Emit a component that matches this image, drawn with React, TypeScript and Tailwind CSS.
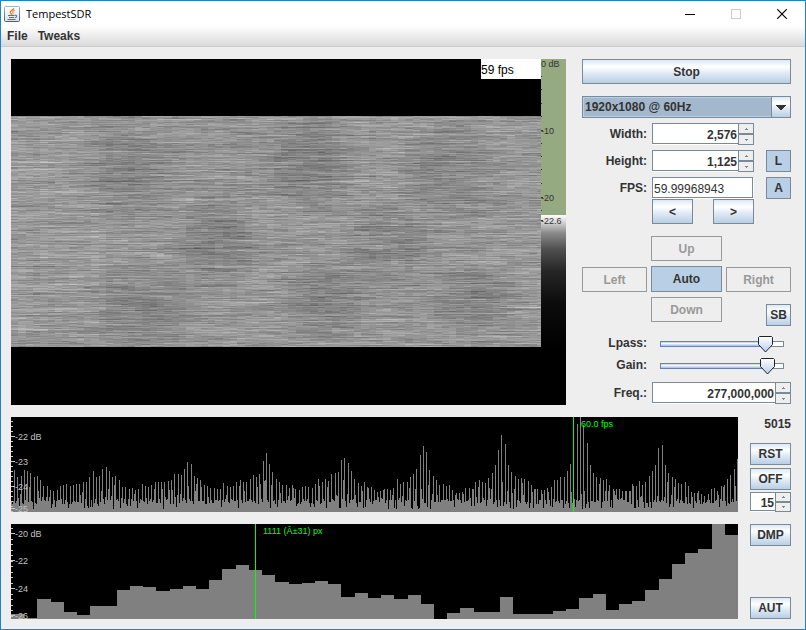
import { useId, useMemo, useState } from "react";
import type { ReactNode } from "react";

/* Deterministic pseudo random numbers, so every render draws the same frame. */
function makeRandom(seed: number) {
  let s = seed >>> 0;
  return () => {
    s = (s + 0x6d2b79f5) >>> 0;
    let t = s;
    t = Math.imul(t ^ (t >>> 15), t | 1);
    t ^= t + Math.imul(t ^ (t >>> 7), t | 61);
    return ((t ^ (t >>> 14)) >>> 0) / 4294967296;
  };
}

/* Darker patches in the received frame: centre x, centre y, radius x, radius y. */
const PATCHES = [
  [117, 57, 38, 40],
  [205, 127, 32, 40],
  [293, 45, 38, 44],
  [373, 127, 38, 38],
  [440, 55, 40, 42],
  [133, 190, 40, 32],
  [310, 184, 38, 34],
  [457, 184, 34, 28],
];

const FRAME_W = 530;
const FRAME_H = 231;
const CELL = 7.3;

function buildFrame() {
  const random = makeRandom(1080);
  const normal = () => random() + random() + random() + random() - 2;
  const levels = new Map<number, string[]>();
  const columns = Math.ceil(FRAME_W / CELL);
  const columnTone = Array.from({ length: columns }, () => normal() * 2);
  for (let y = 0; y < FRAME_H; y++) {
    let drift = normal();
    for (let c = 0; c < columns; c++) {
      drift = drift * 0.68 + normal() * 0.73;
      const x0 = Math.round(c * CELL);
      const x1 = Math.min(FRAME_W, Math.round((c + 1) * CELL));
      let dark = 0;
      for (const [px, py, rx, ry] of PATCHES) {
        const d = ((x0 - px) / rx) ** 2 + ((y - py) / ry) ** 2;
        dark += 16 * Math.exp(-d * d * 0.6);
      }
      const value = 152 - dark + drift * 22 + columnTone[c];
      const level = Math.max(80, Math.min(200, Math.round(value / 6) * 6));
      const list = levels.get(level) ?? [];
      list.push(`M${x0} ${y}h${x1 - x0}v1h${x0 - x1}z`);
      levels.set(level, list);
    }
  }
  return [...levels].map(([level, parts]) => ({ level, d: parts.join("") }));
}

/* Peak heights of the frame-rate autocorrelation, one for each spike. */
const SPIKES = [
  42, 35, 36, 42, 41, 39, 35, 36, 32, 26, 26, 22, 21, 22, 26, 27, 28, 26, 27, 28, 28, 30, 30, 35, 41, 35, 36, 43, 45,
  41, 35, 36, 32, 25, 25, 23, 24, 22, 23, 28, 26, 25, 27, 30, 30, 30, 30, 31, 32, 38, 38, 37, 43, 50, 48, 36, 34, 32,
  27, 26, 24, 24, 23, 23, 29, 26, 25, 26, 30, 32, 30, 30, 33, 37, 35, 38, 51, 59, 48, 40, 33, 30, 27, 27, 24, 27, 23,
  22, 25, 26, 25, 24, 28, 33, 30, 33, 31, 38, 39, 40, 52, 54, 49, 41, 33, 29, 26, 30, 25, 25, 22, 20, 21, 23, 23, 22,
  24, 33, 28, 30, 30, 35, 38, 43, 57, 66, 60, 42, 36, 32, 27, 28, 26, 27, 22, 19, 19, 20, 24, 24, 23, 30, 32, 30, 29,
  34, 39, 47, 62, 77, 68, 47, 40, 36, 33, 34, 33, 31, 27, 23, 23, 22, 22, 24, 25, 32, 32, 35, 35, 41, 48, 36, 88, 95,
  87, 69, 47, 39, 35, 34, 32, 33, 27, 23, 23, 23, 21, 21, 21, 28, 26, 31, 27, 30, 36, 41, 47, 64, 67, 47, 39, 35, 33,
  29, 28, 30, 26, 20, 19, 21, 18, 16, 18, 23, 24, 21, 26, 27, 33, 37, 43, 53,
];

function buildSpectrum() {
  const random = makeRandom(277);
  const columns: number[] = [];
  for (let x = 0; x < 727; x++) {
    const dip = random() < 0.2;
    columns.push(dip ? 3 + Math.round(random() * 3) : 8 + Math.round(random() * 5));
  }
  SPIKES.forEach((h, i) => {
    const x = 3 + Math.round((i * 723) / (SPIKES.length - 1));
    columns[x] = h;
    if (x < 724 && random() < 0.55) {
      const side = random() < 0.5 ? 1 : -1;
      columns[x + side] = 12 + Math.round(random() * Math.min(h, 40) * 0.5);
    }
  });
  return columns.map((h, x) => `M${x} 95v-${h}h1v${h}z`).join("");
}

/* Line-width autocorrelation, one value for each bin. */
const BINS = [
  5, 1, 20, 17, 7, 4, 13, 13, 29, 33, 32, 28, 30, 33, 30, 39, 50, 54, 49, 44, 37, 35, 36, 38, 35, 22, 26, 21, 24, 20,
  24, 15, 0, 6, 11, 7, 7, 22, 5, 5, 5, 8, 10, 21, 25, 9, 15, 18, 29, 40, 55, 66, 70, 95, 84,
];

function buildHistogram() {
  const w = 727 / BINS.length;
  return BINS.map((h, i) => {
    const x0 = Math.round(i * w);
    const x1 = Math.round((i + 1) * w);
    return `M${x0} 95v-${h}H${x1}v${h}z`;
  }).join("");
}

function JavaIcon() {
  return (
    <svg width="16" height="16" viewBox="0 0 16 16" aria-hidden="true">
      <defs>
        <linearGradient id="java-frame" x1="0" y1="0" x2="0" y2="1">
          <stop offset="0" stopColor="#9fb3c4" />
          <stop offset="1" stopColor="#45617d" />
        </linearGradient>
        <linearGradient id="java-fill" x1="0" y1="0" x2="0" y2="1">
          <stop offset="0" stopColor="#ffffff" />
          <stop offset="1" stopColor="#dbe2e8" />
        </linearGradient>
      </defs>
      <rect x="0.5" y="0.5" width="15" height="15" rx="1" fill="url(#java-fill)" stroke="url(#java-frame)" />
      <path d="M9.600 2.200C9.800 4.200 5.600 4.700 6.300 6.600C6.600 7.400 7.400 8 7.600 8.600" fill="none" stroke="#e8791c" strokeWidth="1.300" />
      <path d="M10.800 4.300C9 5 8.200 5.700 8.900 6.600C9.400 7.300 9 8 8.500 8.500" fill="none" stroke="#f09a3e" strokeWidth="1.100" />
      <path d="M4 9.500H10.500M5 11.500H10M3.500 13.500H11.500" fill="none" stroke="#4f7396" strokeWidth="1" />
      <path d="M10.800 9.400C13.300 8.800 13.200 11.200 10.800 11.700" fill="none" stroke="#4f7396" strokeWidth="1.100" />
    </svg>
  );
}

function TitleBar() {
  const control = "flex h-full w-[46px] items-center justify-center hover:bg-[#e5e5e5]";
  return (
    <header className="flex h-[25px] items-center bg-white pl-[3px]">
      <JavaIcon />
      <h1 className="ml-[6px] flex-1 font-['Open_Sans','Noto_Sans',sans-serif] text-[11px] leading-[24px] font-normal text-black">
        TempestSDR
      </h1>
      <button type="button" aria-label="Minimize" className={control}>
        <svg width="10" height="10" viewBox="0 0 10 10" shapeRendering="crispEdges">
          <path d="M0 5h10v1H0z" fill="#000" />
        </svg>
      </button>
      <button type="button" aria-label="Maximize" className={control} disabled>
        <svg width="10" height="10" viewBox="0 0 10 10" shapeRendering="crispEdges">
          <path d="M.5.5h9v9h-9z" fill="none" stroke="#ccc" />
        </svg>
      </button>
      <button type="button" aria-label="Close" className={control}>
        <svg width="10" height="10" viewBox="0 0 10 10">
          <path d="M.25.25l9.500 9.500M9.750.25l-9.500 9.500" fill="none" stroke="#000" strokeWidth="1.200" />
        </svg>
      </button>
    </header>
  );
}

function MenuBar() {
  return (
    <nav className="flex h-[21px] items-center gap-[10px] border-b border-[#ccc] bg-linear-to-b from-white to-[#dadada] pl-[6px]">
      <button type="button" className="leading-[20px]">File</button>
      <button type="button" className="leading-[20px]">Tweaks</button>
    </nav>
  );
}

type ButtonProps = {
  children: ReactNode;
  tone?: "raised" | "pressed" | "disabled";
  className?: string;
};

const TONES = {
  raised:
    "border-[#7a8a99] bg-[linear-gradient(to_bottom,#dde8f3_0%,#ffffff_30%,#dde8f3_60%,#b8cfe5_100%)]",
  pressed: "border-[#7a8a99] bg-[#b8cfe5]",
  disabled: "border-[#999] bg-[#eee] text-[#999]",
};

function MetalButton({ children, tone = "raised", className = "" }: ButtonProps) {
  return (
    <button
      type="button"
      disabled={tone === "disabled"}
      aria-pressed={tone === "pressed" ? true : undefined}
      className={`flex items-center justify-center border ${TONES[tone]} ${className}`}
    >
      {children}
    </button>
  );
}

function SpinArrow({ up = false }: { up?: boolean }) {
  return (
    <svg width="3" height="2" viewBox="0 0 3 2" shapeRendering="crispEdges" aria-hidden="true">
      <path d={up ? "M1 0h1v1h1v1H0V1h1z" : "M0 0h3v1H2v1H1V1H0z"} fill="#7a8a99" />
    </svg>
  );
}

function Spinner({ id, label, initial, className }: { id: string; label: string; initial: number; className: string }) {
  const [value, setValue] = useState(initial);
  const arrow = "flex min-h-0 flex-1 items-center justify-center border border-[#7a8a99] bg-[#eee]";
  return (
    <div className={`flex ${className}`}>
      <input
        id={id}
        aria-label={label}
        value={value.toLocaleString("en-US")}
        onChange={(e) => setValue(Number(e.target.value.replace(/\D/g, "")))}
        className="mb-px w-0 min-w-0 flex-1 border border-r-0 border-[#7a8a99] bg-white pt-[2px] pr-px text-right font-bold shadow-[0_1px_0_#fff] outline-none"
      />
      <div className="flex w-4 flex-col">
        <button type="button" aria-label={`Increase ${label}`} className={arrow} onClick={() => setValue(value + 1)}>
          <SpinArrow up />
        </button>
        <button type="button" aria-label={`Decrease ${label}`} className={arrow} onClick={() => setValue(value - 1)}>
          <SpinArrow />
        </button>
      </div>
    </div>
  );
}

function FieldLabel({ htmlFor, children }: { htmlFor: string; children: ReactNode }) {
  return (
    <label htmlFor={htmlFor} className="mr-[5px] w-[65px] shrink-0 text-right">
      {children}
    </label>
  );
}

function SliderRow({ id, label, initial }: { id: string; label: string; initial: number }) {
  const [value, setValue] = useState(initial);
  const gradient = useId();
  const x = Math.round((value * 109) / 100);
  return (
    <div className="flex h-[22px] items-start">
      <FieldLabel htmlFor={id}>{label}</FieldLabel>
      <div className="relative ml-2 h-[17px] w-[124px]">
        <svg width="124" height="17" viewBox="0 0 124 17" aria-hidden="true">
          <defs>
            <linearGradient id={`${gradient}t`} x1="0" y1="0" x2="0" y2="1">
              <stop offset="0" stopColor="#fff" />
              <stop offset="1" stopColor="#b8cfe5" />
            </linearGradient>
            <linearGradient id={`${gradient}f`} x1="0" y1="0" x2="0" y2="1">
              <stop offset="0" stopColor="#a3b8cc" />
              <stop offset="0.400" stopColor="#f5f9fd" />
              <stop offset="1" stopColor="#8fb0d5" />
            </linearGradient>
          </defs>
          <rect x="0.5" y="5.500" width="123" height="5" fill="#fff" stroke="#7a8a99" />
          <rect x="0.5" y="5.500" width={x + 7} height="5" fill={`url(#${gradient}f)`} stroke="#6382bf" />
          <path
            d={`M${x + 1.5} .5h12l1 1v7l-7 7.500l-7-7.500v-7z`}
            fill={`url(#${gradient}t)`}
            stroke="#222"
          />
        </svg>
        <input
          id={id}
          type="range"
          min={0}
          max={100}
          value={value}
          onChange={(e) => setValue(Number(e.target.value))}
          className="absolute inset-0 m-0 h-full w-full cursor-pointer opacity-0"
        />
      </div>
    </div>
  );
}

const MODES = ["1920x1080 @ 60Hz", "1280x1024 @ 60Hz", "1024x768 @ 60Hz", "800x600 @ 60Hz"];

function ControlPanel() {
  return (
    <aside className="flex w-[209px] shrink-0 flex-col">
      <MetalButton className="h-[25px]">Stop</MetalButton>

      <div className="relative mt-3 flex h-[22px]">
        <select
          aria-label="Video mode"
          className="h-full w-full appearance-none border border-[#7a8a99] bg-[#a3b8cc] pl-[2px] font-bold shadow-[inset_0_0_0_1px_#b8cfe5] outline-none"
        >
          {MODES.map((mode) => (
            <option key={mode}>{mode}</option>
          ))}
        </select>
        <span className="pointer-events-none absolute inset-y-0 right-0 flex w-5 items-center justify-center border border-[#7a8a99] bg-[linear-gradient(to_bottom,#dde8f3_0%,#ffffff_30%,#dde8f3_60%,#b8cfe5_100%)]">
          <svg width="10" height="5" viewBox="0 0 10 5" shapeRendering="crispEdges" aria-hidden="true">
            <path d="M0 0h10v1H9v1H8v1H7v1H6v1H4V4H3V3H2V2H1V1H0z" fill="#333" />
          </svg>
        </span>
      </div>

      <div className="mt-[5px] flex items-center">
        <FieldLabel htmlFor="width">Width:</FieldLabel>
        <Spinner id="width" label="Width" initial={2576} className="mr-[37px] h-[22px] flex-1" />
      </div>
      <div className="mt-[5px] flex items-center">
        <FieldLabel htmlFor="height">Height:</FieldLabel>
        <Spinner id="height" label="Height" initial={1125} className="h-[22px] flex-1" />
        <MetalButton tone="pressed" className="ml-3 h-[22px] w-[25px]">L</MetalButton>
      </div>
      <div className="mt-[5px] flex items-center">
        <FieldLabel htmlFor="fps">FPS:</FieldLabel>
        <input
          id="fps"
          defaultValue="59.99968943"
          className="mr-px mb-px h-[21px] w-0 min-w-0 flex-1 border border-[#7a8a99] bg-white pt-[2px] pl-px font-normal shadow-[1px_1px_0_#fff] outline-none"
        />
        <MetalButton tone="pressed" className="ml-3 h-[22px] w-[25px]">A</MetalButton>
      </div>
      <div className="mr-[37px] ml-[70px] flex justify-between">
        <MetalButton className="h-[25px] w-[41px]">&lt;</MetalButton>
        <MetalButton className="h-[25px] w-[41px]">&gt;</MetalButton>
      </div>

      <div className="mt-3 grid grid-cols-[65px_1fr_65px] grid-rows-[25px_26px_29px] gap-x-1 gap-y-[5px]">
        <MetalButton tone="disabled" className="col-start-2">Up</MetalButton>
        <MetalButton tone="disabled" className="col-start-1 h-[25px] self-end">Left</MetalButton>
        <MetalButton tone="pressed">Auto</MetalButton>
        <MetalButton tone="disabled" className="h-[25px] self-end">Right</MetalButton>
        <MetalButton tone="disabled" className="col-start-2 h-[25px]">Down</MetalButton>
        <MetalButton className="h-[22px] w-[25px] self-end justify-self-end">SB</MetalButton>
      </div>

      <div className="mt-[10px]">
        <SliderRow id="lpass" label="Lpass:" initial={90} />
        <SliderRow id="gain" label="Gain:" initial={92} />
      </div>

      <div className="mt-[2px] flex items-center">
        <FieldLabel htmlFor="freq">Freq.:</FieldLabel>
        <Spinner id="freq" label="Frequency" initial={277000000} className="h-[22px] flex-1" />
      </div>
    </aside>
  );
}

type Mark = { at: number; text: string };

function LevelGauge() {
  const marks: Mark[] = [
    { at: 5, text: "0 dB" },
    { at: 72, text: "-10" },
    { at: 139, text: "-20" },
    { at: 162, text: "-22.6" },
  ];
  const minor = [18, 31, 45, 58, 85, 98, 111, 125, 152];
  return (
    <div className="relative w-[25px] shrink-0 bg-[linear-gradient(to_bottom,#96aa82_156px,#ffffff_156px,#d0d0d0_164px,#8a8a8a_174px,#505050_190px,#262626_212px,#0c0c0c_244px,#000000_290px)] font-normal text-[#333]">
      <svg width="25" height="346" viewBox="0 0 25 346" shapeRendering="crispEdges" aria-hidden="true">
        <path d={minor.map((y) => `M0 ${y - 1}h1v1H0z`).join("")} fill="#333" />
        <path d={marks.slice(1).map((m) => `M0 ${m.at - 1}h2v1H0z`).join("")} fill="#333" />
      </svg>
      {marks.map((m) => (
        <span
          key={m.text}
          className="absolute left-0 -translate-y-1/2 text-[9px] leading-[10px] whitespace-nowrap"
          style={{ top: m.at }}
        >
          {m.text}
        </span>
      ))}
    </div>
  );
}

function VideoView() {
  const frame = useMemo(buildFrame, []);
  return (
    <section className="flex h-[346px] min-w-0 flex-1 bg-black">
      <div className="relative min-w-0 flex-1 pt-[57px]">
        <svg
          className="block h-[231px] w-full"
          viewBox={`0 0 ${FRAME_W} ${FRAME_H}`}
          preserveAspectRatio="none"
          shapeRendering="crispEdges"
          role="img"
          aria-label="Received frame"
        >
          {frame.map(({ level, d }) => (
            <path key={level} d={d} fill={`rgb(${level},${level},${level})`} />
          ))}
        </svg>
        <output className="absolute top-0 right-0 h-5 w-[60px] bg-white text-[12px] leading-[22px] font-normal text-black">
          59 fps
        </output>
      </div>
      <LevelGauge />
    </section>
  );
}

type PlotProps = {
  label: string;
  path: string;
  ticks: Mark[];
  minor: number[];
  cursor: number;
  cursorText: string;
};

function Plot({ label, path, ticks, minor, cursor, cursorText }: PlotProps) {
  return (
    <section className="relative h-[95px] min-w-0 flex-1 bg-black text-[9px] leading-[6px] font-normal">
      <svg
        className="block h-full w-full"
        viewBox="0 0 727 95"
        preserveAspectRatio="none"
        shapeRendering="crispEdges"
        role="img"
        aria-label={label}
      >
        <path d={path} fill="#808080" />
        <path d={minor.map((y) => `M0 ${y - 1}h2v1H0z`).join("")} fill="#c8c8c8" />
        <path d={ticks.map((t) => `M0 ${t.at - 1}h4v1H0z`).join("")} fill="#c8c8c8" />
        <path d={`M${cursor} 0h1v95h-1z`} fill="#00ff00" />
      </svg>
      {ticks.map((t) => (
        <span
          key={t.text}
          className="absolute left-1 -translate-y-1/2 whitespace-nowrap text-[#c0c0c0]"
          style={{ top: t.at }}
        >
          {t.text}
        </span>
      ))}
      <span
        className="absolute top-1 ml-2 whitespace-nowrap text-[#00ff00]"
        style={{ left: `${(cursor / 727) * 100}%` }}
      >
        {cursorText}
      </span>
    </section>
  );
}

export default function App() {
  const spectrum = useMemo(buildSpectrum, []);
  const histogram = useMemo(buildHistogram, []);
  const fineMarks = Array.from({ length: 19 }, (_, i) => 5 + i * 5);
  const lineMarks = Array.from({ length: 17 }, (_, i) => Math.round(4.5 + i * 5.5));
  return (
    <div className="flex min-h-screen flex-col border border-[#1883d7] bg-[#eee] font-['Liberation_Sans',Arial,sans-serif] text-[12px] leading-[14px] font-bold text-[#333]">
      <TitleBar />
      <MenuBar />
      <main className="flex flex-col gap-3 pt-3 pr-[14px] pb-[10px] pl-[10px]">
        <div className="flex gap-4">
          <VideoView />
          <ControlPanel />
        </div>

        <div className="flex gap-3">
          <Plot
            label="Frame rate autocorrelation"
            path={spectrum}
            minor={fineMarks}
            ticks={[
              { at: 20, text: "-22 dB" },
              { at: 45, text: "-23" },
              { at: 70, text: "-24" },
              { at: 92, text: "-25" },
            ]}
            cursor={562}
            cursorText="60.0 fps"
          />
          <div className="flex w-[41px] shrink-0 flex-col">
            <output className="text-right">5015</output>
            <MetalButton className="mt-3 h-[22px]">RST</MetalButton>
            <MetalButton className="mt-[3px] h-[22px]">OFF</MetalButton>
            <Spinner id="frames" label="Averaged frames" initial={15} className="mt-[2px] h-5" />
          </div>
        </div>

        <div className="flex gap-3">
          <Plot
            label="Line width autocorrelation"
            path={histogram}
            minor={lineMarks}
            ticks={[
              { at: 10, text: "-20 dB" },
              { at: 37, text: "-22" },
              { at: 65, text: "-24" },
              { at: 92, text: "-26" },
            ]}
            cursor={244}
            cursorText="1111 (Â±31) px"
          />
          <div className="flex w-[41px] shrink-0 flex-col justify-between">
            <MetalButton className="h-[22px]">DMP</MetalButton>
            <MetalButton className="h-[22px]">AUT</MetalButton>
          </div>
        </div>
      </main>
    </div>
  );
}
